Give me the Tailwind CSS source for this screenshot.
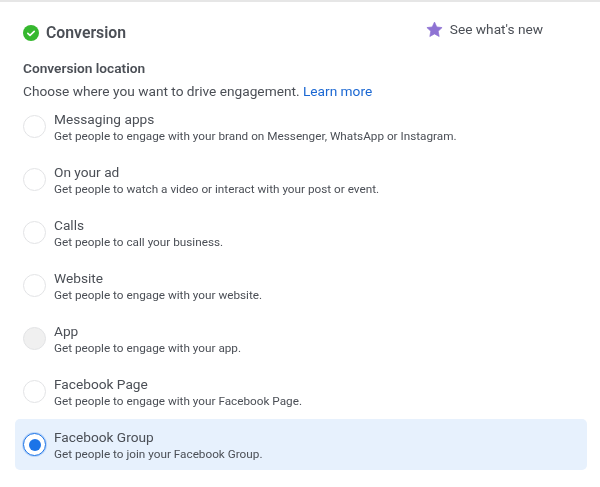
<!DOCTYPE html>
<html>
<head>
<meta charset="utf-8">
<script src="https://cdn.jsdelivr.net/npm/@tailwindcss/browser@4"></script>
</head>
<body class="bg-white">
<div class="w-[600px] h-[487px] overflow-hidden border-t-2 border-[#e6e6e6] font-['Roboto',sans-serif] text-[#4b4f56] blur-[0.35px]">
  <div class="flex items-center justify-between pt-[20px] pl-[23px] pr-[57px] h-[42px]">
    <div class="flex items-center gap-[7px]">
      <svg class="w-[16px] h-[16px]" viewBox="0 0 16 16"><circle cx="8" cy="8" r="8" fill="#36b82f"/><path d="M4.8 8.3l2.2 2 4.2-4" fill="none" stroke="#fff" stroke-width="1.6" stroke-linecap="round" stroke-linejoin="round"/></svg>
      <span class="text-[15.8px] leading-[20px] font-semibold">Conversion</span>
    </div>
    <div class="flex items-center gap-[7px] mb-[8px]">
      <svg class="w-[17px] h-[17px]" viewBox="0 0 24 24"><path d="M12 1.5l3.2 6.9 7.5.9-5.5 5.1 1.4 7.5-6.6-3.7-6.6 3.7 1.4-7.5L1.3 9.3l7.5-.9z" fill="#8e72d3" stroke="#8e72d3" stroke-width="1" stroke-linejoin="round"/></svg>
      <span class="text-[13.7px] leading-[20px]">See what's new</span>
    </div>
  </div>
  <div class="pl-[23px] mt-[15px] text-[13.7px] leading-[18px] font-semibold">Conversion location</div>
  <div class="pl-[23px] mt-[5px] text-[13.7px] leading-[18px]">Choose where you want to drive engagement. <span class="text-[#1a67d2]">Learn more</span></div>

  <div class="flex flex-col gap-[2px] ml-[15px] w-[572px] mt-[1px]">
    <div class="flex items-center gap-[8px] h-[51px] pl-[8px]">
      <span class="w-[23px] h-[23px] rounded-full border border-[#e2e3e5] bg-white shrink-0"></span>
      <div><div class="text-[13.7px] leading-[18px]">Messaging apps</div><div class="text-[11.75px] leading-[15px] mt-[1px]">Get people to engage with your brand on Messenger, WhatsApp or Instagram.</div></div>
    </div>
    <div class="flex items-center gap-[8px] h-[51px] pl-[8px]">
      <span class="w-[23px] h-[23px] rounded-full border border-[#e2e3e5] bg-white shrink-0"></span>
      <div><div class="text-[13.7px] leading-[18px]">On your ad</div><div class="text-[11.75px] leading-[15px] mt-[1px]">Get people to watch a video or interact with your post or event.</div></div>
    </div>
    <div class="flex items-center gap-[8px] h-[51px] pl-[8px]">
      <span class="w-[23px] h-[23px] rounded-full border border-[#e2e3e5] bg-white shrink-0"></span>
      <div><div class="text-[13.7px] leading-[18px]">Calls</div><div class="text-[11.75px] leading-[15px] mt-[1px]">Get people to call your business.</div></div>
    </div>
    <div class="flex items-center gap-[8px] h-[51px] pl-[8px]">
      <span class="w-[23px] h-[23px] rounded-full border border-[#e2e3e5] bg-white shrink-0"></span>
      <div><div class="text-[13.7px] leading-[18px]">Website</div><div class="text-[11.75px] leading-[15px] mt-[1px]">Get people to engage with your website.</div></div>
    </div>
    <div class="flex items-center gap-[8px] h-[51px] pl-[8px]">
      <span class="w-[23px] h-[23px] rounded-full border border-[#e2e3e5] bg-[#f0f0f0] shrink-0"></span>
      <div><div class="text-[13.7px] leading-[18px]">App</div><div class="text-[11.75px] leading-[15px] mt-[1px]">Get people to engage with your app.</div></div>
    </div>
    <div class="flex items-center gap-[8px] h-[51px] pl-[8px]">
      <span class="w-[23px] h-[23px] rounded-full border border-[#e2e3e5] bg-white shrink-0"></span>
      <div><div class="text-[13.7px] leading-[18px]">Facebook Page</div><div class="text-[11.75px] leading-[15px] mt-[1px]">Get people to engage with your Facebook Page.</div></div>
    </div>
    <div class="flex items-center gap-[8px] h-[51px] pl-[8px] bg-[#e7f1fd] rounded-[5px]">
      <span class="w-[23px] h-[23px] rounded-full border-[1.5px] border-[#1b74e8] bg-white shadow-[0_0_0_1px_#bcd6f8] shrink-0 flex items-center justify-center"><span class="w-[12px] h-[12px] rounded-full bg-[#1b74e8]"></span></span>
      <div><div class="text-[13.7px] leading-[18px]">Facebook Group</div><div class="text-[11.75px] leading-[15px] mt-[1px]">Get people to join your Facebook Group.</div></div>
    </div>
  </div>
</div>
</body>
</html>
